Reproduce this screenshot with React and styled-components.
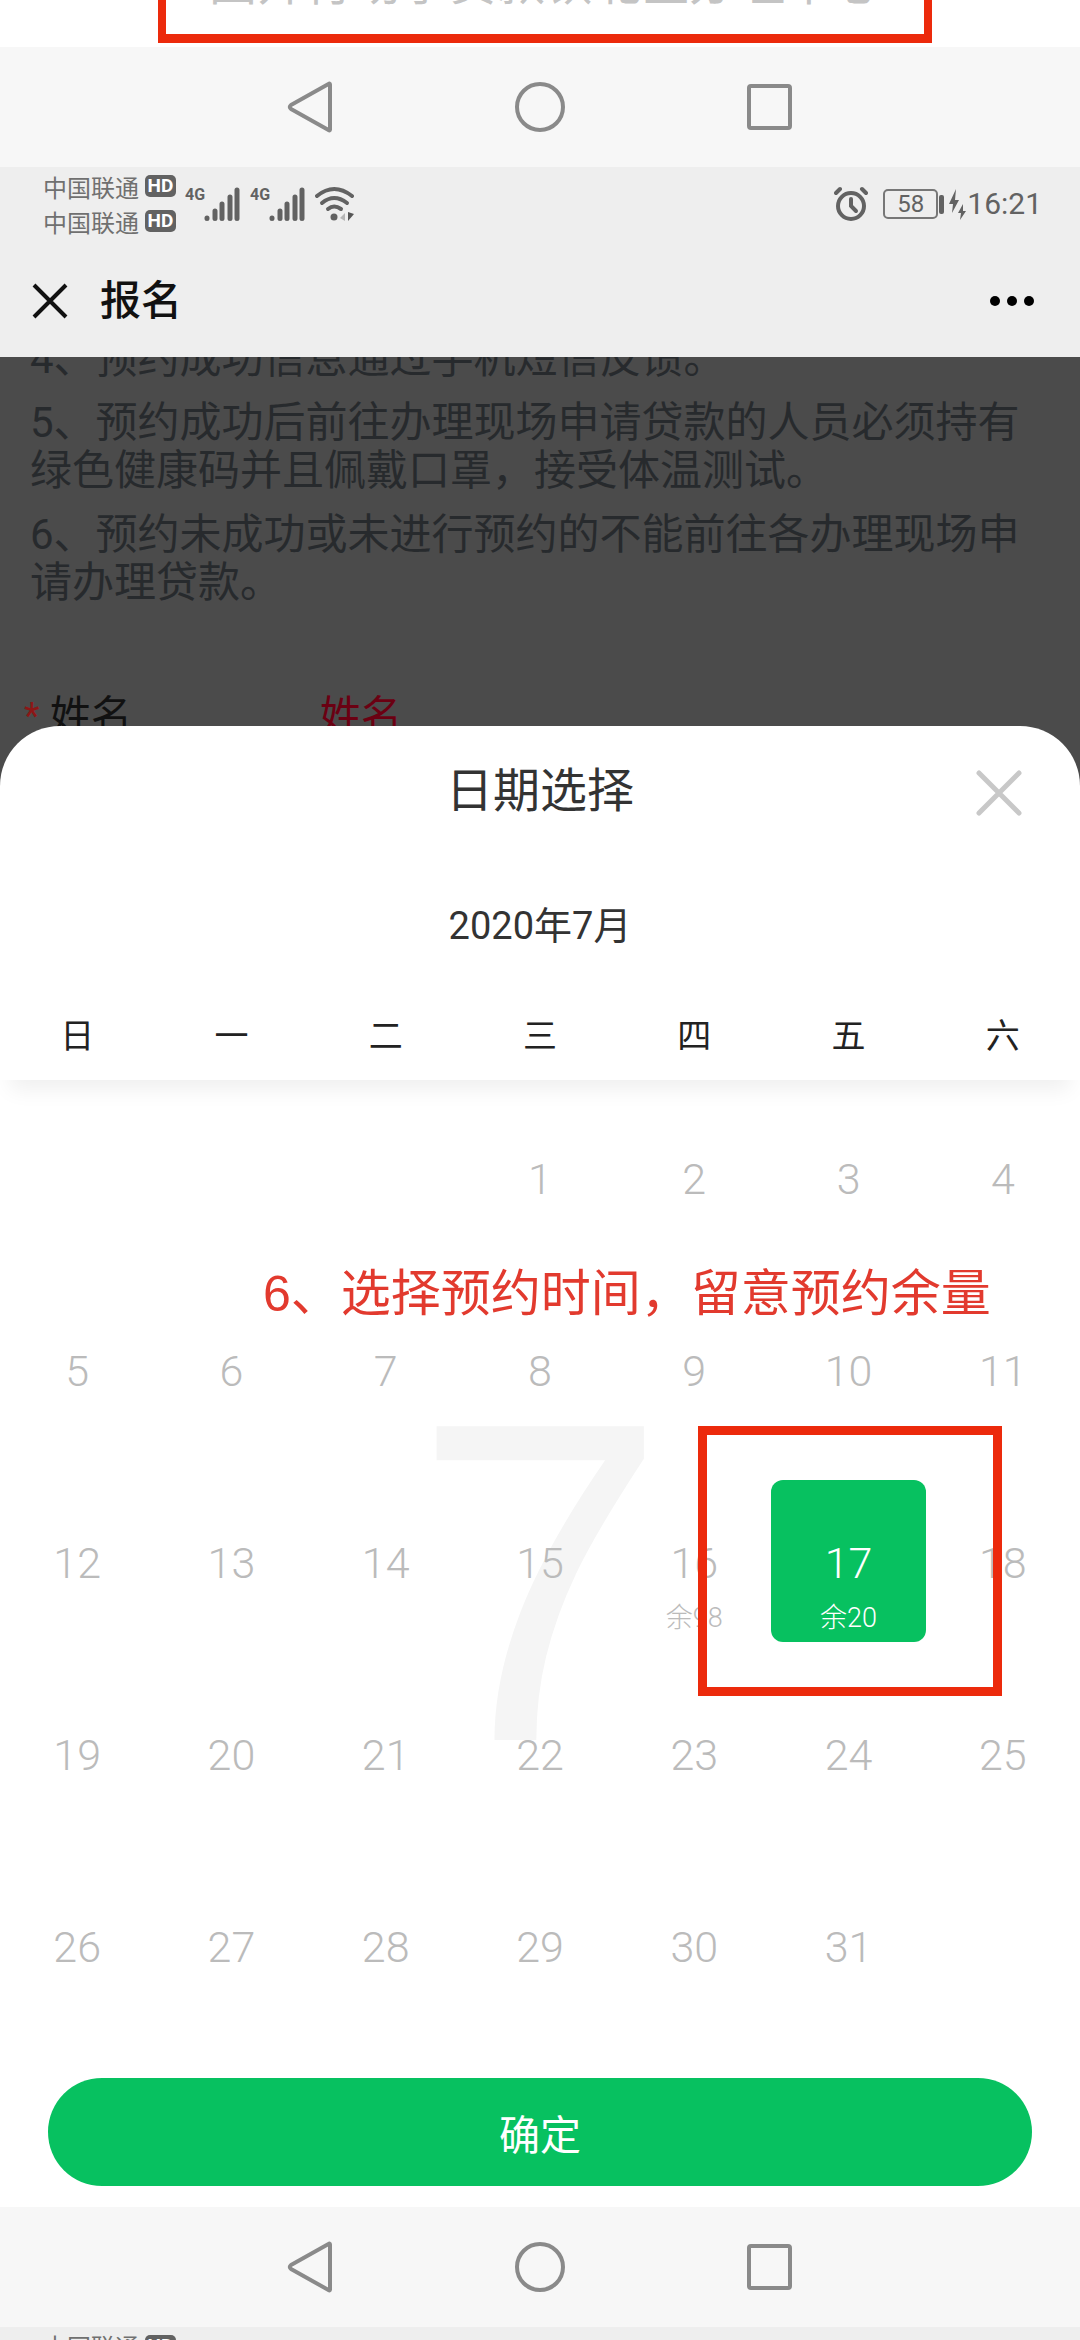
import styled, { createGlobalStyle } from "styled-components"

const weekdays = ["日", "一", "二", "三", "四", "五", "六"]
const firstWeekday = 3
const dayCount = 31
const selectedDay = 17
const remaining = { 16: "余98", 17: "余20" }

const notices = [
    "4、预约成功信息通过手机短信反馈。",
    "5、预约成功后前往办理现场申请贷款的人员必须持有绿色健康码并且佩戴口罩，接受体温测试。",
    "6、预约未成功或未进行预约的不能前往各办理现场申请办理贷款。",
]

const NavBar = () => {
    return (
        <StyledNav>
            <NavButton aria-label="返回">
                <svg width="52" height="56" viewBox="0 0 52 56">
                    <path d="M47 5.500V50.500Q47 52 45.500 51L8 30Q5.500 28 8 26L45.500 5Q47 4 47 5.500Z" fill="none" stroke="#8a8a8a" strokeWidth="4" strokeLinejoin="round" />
                </svg>
            </NavButton>
            <NavButton aria-label="主页">
                <svg width="52" height="56" viewBox="0 0 52 56">
                    <circle cx="26" cy="28" r="23" fill="none" stroke="#8a8a8a" strokeWidth="4" />
                </svg>
            </NavButton>
            <NavButton aria-label="最近任务">
                <svg width="52" height="56" viewBox="0 0 52 56">
                    <rect x="4" y="7" width="41" height="42" rx="2" fill="none" stroke="#8a8a8a" strokeWidth="4" />
                </svg>
            </NavButton>
        </StyledNav>
    )
}

const Carriers = () => {
    return (
        <CarrierList>
            <Carrier>中国联通<Hd>HD</Hd></Carrier>
            <Carrier>中国联通<Hd>HD</Hd></Carrier>
        </CarrierList>
    )
}

const Signal = () => {
    return (
        <SignalBox>
            <Network>4G</Network>
            <svg width="36" height="36" viewBox="0 0 36 36">
                <g stroke="#626262" strokeWidth="5" strokeLinecap="round">
                    <path d="M3 32V32.500M11 25V32.500M18 18V32.500M26 11V32.500M33 4V32.500" />
                </g>
            </svg>
        </SignalBox>
    )
}

const StatusBar = () => {
    return (
        <StyledStatus>
            <Carriers />
            <Signal />
            <Signal />
            <svg width="42" height="36" viewBox="0 0 42 36">
                <g fill="none" stroke="#626262" strokeWidth="4" strokeLinecap="round">
                    <path d="M2 10Q19 -4 37 10" />
                    <path d="M7 17Q19 7 32 17" />
                    <path d="M13 23Q19 18 26 23" />
                </g>
                <circle cx="19" cy="31" r="3.500" fill="#626262" />
                <path d="M30 27V35L25 32Z" fill="#b5b5b5" />
                <path d="M33 26V35L39 28Z" fill="#555" />
            </svg>
            <StatusRight>
                <svg width="34" height="36" viewBox="0 0 34 36">
                    <circle cx="17" cy="20" r="13" fill="none" stroke="#626262" strokeWidth="4" />
                    <path d="M17 13V20L22 25" fill="none" stroke="#626262" strokeWidth="4" strokeLinecap="round" />
                    <path d="M2 7L6 3M28 3L32 7" stroke="#626262" strokeWidth="4" strokeLinecap="round" />
                </svg>
                <Battery>58</Battery>
                <svg width="28" height="36" viewBox="0 0 28 36">
                    <rect x="0" y="9" width="5" height="19" rx="2" fill="#626262" />
                    <path d="M17 3L10 18H14L13 27L20 14H16ZM24 18L19 27H22L21 34L27 25H24Z" fill="#626262" />
                </svg>
                <Clock>16:21</Clock>
            </StatusRight>
        </StyledStatus>
    )
}

const TitleBar = () => {
    return (
        <StyledTitleBar>
            <IconButton aria-label="关闭页面">
                <svg width="36" height="38" viewBox="0 0 36 38">
                    <path d="M2 3L34 35M34 3L2 35" stroke="#111" strokeWidth="4" />
                </svg>
            </IconButton>
            <PageTitle>报名</PageTitle>
            <IconButton aria-label="更多">
                <svg width="44" height="12" viewBox="0 0 44 12">
                    <circle cx="5" cy="6" r="5" />
                    <circle cx="22" cy="6" r="5" />
                    <circle cx="39" cy="6" r="5" />
                </svg>
            </IconButton>
        </StyledTitleBar>
    )
}

const DatePicker = () => {
    const days = Array.from({ length: dayCount }, (_, i) => i + 1)
    return (
        <Sheet>
            <SheetHeader>
                <SheetTitle>日期选择</SheetTitle>
                <CloseButton aria-label="关闭">
                    <svg width="46" height="46" viewBox="0 0 46 46">
                        <path d="M3 3L43 43M43 3L3 43" stroke="#c8c8c8" strokeWidth="5" strokeLinecap="round" />
                    </svg>
                </CloseButton>
            </SheetHeader>
            <Month>2020年7月</Month>
            <Week>
                {weekdays.map((day) => <span key={day}>{day}</span>)}
            </Week>
            <Calendar>
                <Watermark>7</Watermark>
                {days.map((day) => (
                    <Day key={day} $start={day === 1 ? firstWeekday + 1 : undefined} $selected={day === selectedDay}>
                        {day}
                        {remaining[day] && <Remaining>{remaining[day]}</Remaining>}
                    </Day>
                ))}
                <Note>6、选择预约时间，留意预约余量</Note>
                <Highlight />
            </Calendar>
            <ConfirmArea>
                <Confirm>确定</Confirm>
            </ConfirmArea>
        </Sheet>
    )
}

const App = () => {
    return (
        <Page>
            <GlobalStyle />
            <Previous>
                <Framed><span>国开行助学贷款钦北区办理中心</span></Framed>
            </Previous>
            <NavBar />
            <StatusBar />
            <TitleBar />
            <Dimmed>
                {notices.map((text) => <Notice key={text}>{text}</Notice>)}
                <Field>
                    <Star>*</Star>
                    <FieldName>姓名</FieldName>
                    <FieldHint>姓名</FieldHint>
                </Field>
            </Dimmed>
            <DatePicker />
            <NavBar />
            <Next>
                <Carriers />
            </Next>
        </Page>
    )
}

export default App

const GlobalStyle = createGlobalStyle`
    * {
        box-sizing: border-box;
    }
    body {
        margin: 0;
        background: #fff;
        font-family: Roboto, "Noto Sans CJK SC", sans-serif;
    }
    button {
        border: 0;
        padding: 0;
        background: none;
        font-family: inherit;
    }
    svg {
        display: block;
        flex: none;
    }
`

const Page = styled.div`
    height: 100vh;
    overflow: hidden;
    display: flex;
    flex-direction: column;
    & > * {
        flex: none;
    }
`

const Previous = styled.div`
    height: 47px;
    padding: 0 148px 4px 158px;
`

const Framed = styled.div`
    height: 43px;
    border: solid #ec2a0c;
    border-width: 0 8px 9px;
    display: flex;
    align-items: flex-end;
    justify-content: center;
    overflow: hidden;
    color: #c4c4c4;
    font-size: 48px;
    line-height: 56px;
    white-space: nowrap;
    padding-bottom: 22px;
`

const StyledNav = styled.nav`
    height: 120px;
    padding: 0 283px;
    background: #f7f7f7;
    display: flex;
    align-items: center;
    justify-content: space-between;
`

const NavButton = styled.button`
    width: 52px;
    height: 56px;
`

const StyledStatus = styled.div`
    height: 79px;
    padding: 0 38px 6px 43px;
    background: #eee;
    color: #626262;
    display: flex;
    align-items: center;
`

const CarrierList = styled.div`
    width: 142px;
`

const Carrier = styled.div`
    height: 35px;
    display: flex;
    align-items: center;
    gap: 6px;
    font-size: 24px;
    white-space: nowrap;
    color: #707070;
`

const Hd = styled.span`
    width: 31px;
    height: 22px;
    border-radius: 5px;
    background: #626262;
    color: #fff;
    font-size: 19px;
    font-weight: bold;
    line-height: 22px;
    text-align: center;
`

const SignalBox = styled.div`
    display: flex;
    width: 65px;
`

const Network = styled.span`
    width: 19px;
    font-size: 16px;
    line-height: 18px;
    font-weight: bold;
`

const StatusRight = styled.div`
    margin-left: auto;
    display: flex;
    align-items: center;
`

const Battery = styled.span`
    width: 55px;
    height: 30px;
    margin: 0 1px 0 15px;
    border: 2px solid #777;
    border-radius: 5px;
    font-size: 24px;
    line-height: 27px;
    text-align: center;
`

const Clock = styled.span`
    font-size: 30px;
    line-height: 40px;
`

const StyledTitleBar = styled.header`
    height: 111px;
    padding: 0 46px 2px 32px;
    background: #eee;
    display: flex;
    align-items: center;
`

const IconButton = styled.button`
    flex: none;
`

const PageTitle = styled.h1`
    margin: 0 auto 0 32px;
    font-size: 41px;
    line-height: 60px;
    font-weight: 500;
    color: #111;
`

const Dimmed = styled.main`
    height: 370px;
    padding: 0 60px 0 24px;
    background: #4b4b4b;
    overflow: hidden;
    display: flex;
    flex-direction: column;
    justify-content: flex-end;
`

const Notice = styled.p`
    margin: 0 0 16px;
    padding-left: 6px;
    flex: none;
    font-size: 42px;
    line-height: 48px;
    color: #272a2d;
`

const Field = styled.div`
    flex: none;
    height: 42px;
    margin-top: 62px;
    display: flex;
    font-size: 41px;
    line-height: 62px;
`

const Star = styled.span`
    width: 26px;
    color: #8c1616;
    font-size: 36px;
`

const FieldName = styled.span`
    width: 270px;
    color: #111;
`

const FieldHint = styled.span`
    color: #6b0012;
`

const Sheet = styled.section`
    margin-top: -1px;
    background: linear-gradient(#4b4b4b 120px, #fff 120px);
`

const SheetHeader = styled.div`
    height: 130px;
    border-radius: 60px 60px 0 0;
    background: #fff;
    display: flex;
    align-items: center;
    justify-content: center;
    position: relative;
`

const SheetTitle = styled.h2`
    margin: 0;
    font-size: 47px;
    line-height: 60px;
    font-weight: 400;
    color: #333;
`

const CloseButton = styled.button`
    position: absolute;
    right: 58px;
    top: 44px;
`

const Month = styled.div`
    height: 136px;
    text-align: center;
    font-size: 38px;
    line-height: 140px;
    color: #333;
`

const Week = styled.div`
    height: 88px;
    display: grid;
    grid-template-columns: repeat(7, 1fr);
    text-align: center;
    font-size: 34px;
    line-height: 88px;
    color: #222;
    box-shadow: 0 20px 20px -10px #f0f0f0;
`

const Calendar = styled.div`
    position: relative;
    height: 998px;
    padding-top: 16px;
    display: grid;
    grid-template-columns: repeat(7, 1fr);
    grid-auto-rows: 162px;
    row-gap: 30px;
`

const Watermark = styled.div`
    position: absolute;
    top: 232px;
    width: 100%;
    text-align: center;
    font-family: "Liberation Sans", sans-serif;
    font-size: 456px;
    line-height: 540px;
    color: #f5f5f5;
`

const Day = styled.button`
    grid-column-start: ${({ $start }) => $start};
    position: relative;
    padding-top: 4px;
    border-radius: 12px;
    background: ${({ $selected }) => ($selected ? "#07c160" : "none")};
    color: ${({ $selected }) => ($selected ? "#fff" : "#bbb")};
    font-size: 43px;
    font-weight: 300;
    line-height: 50px;
`

const Remaining = styled.span`
    position: absolute;
    left: 0;
    right: 0;
    bottom: 6px;
    font-size: 27px;
    line-height: 36px;
`

const Note = styled.div`
    position: absolute;
    left: 263px;
    top: 180px;
    font-family: "Liberation Sans", "Noto Sans CJK SC", sans-serif;
    font-size: 50px;
    line-height: 68px;
    color: #e23a2e;
    white-space: nowrap;
`

const Highlight = styled.div`
    position: absolute;
    left: 698px;
    top: 346px;
    width: 304px;
    height: 270px;
    border: 9px solid #ec2a0c;
`

const ConfirmArea = styled.div`
    padding: 0 48px 21px;
`

const Confirm = styled.button`
    width: 100%;
    height: 108px;
    border-radius: 54px;
    background: #07c160;
    color: #fff;
    font-size: 41px;
`

const Next = styled.div`
    height: 14px;
    padding: 1px 43px 0;
    background: #eee;
    overflow: hidden;
`
